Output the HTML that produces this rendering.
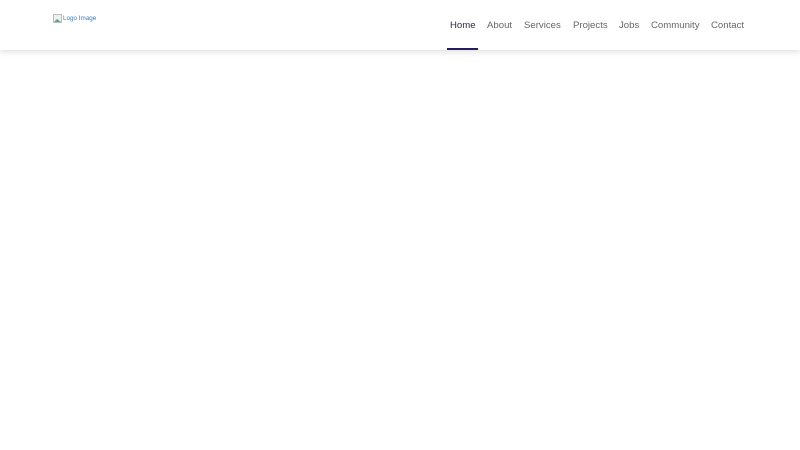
<!DOCTYPE html>
<html><head><meta charset="utf-8"><style>
html,body{margin:0;padding:0;background:#fff;width:800px;height:450px;overflow:hidden;font-family:"Liberation Sans",sans-serif}
.hdr{position:absolute;left:0;top:0;width:800px;height:50px;background:#fff;box-shadow:0 2px 6px rgba(0,0,0,0.12)}
.logo{position:absolute;left:53px;top:14px;font-size:6.3px;color:#3a7bbf;display:flex;align-items:center}
.logo svg{margin-right:1px}
.nav a{position:absolute;top:20px;font-size:9.6px;color:#666;text-decoration:none}
.nav a.act{color:#2d2a4a}
.ul{position:absolute;left:447px;top:48px;width:31px;height:2px;background:#2a1a5e}
</style></head><body>
<div class="hdr">
<div class="logo"><svg width="9" height="9" viewBox="0 0 9 9"><rect x="0.5" y="0.5" width="8" height="8" fill="#eee" stroke="#999" stroke-width="0.6"/><path d="M1 8 L4 5 L8 8Z" fill="#5a9"/></svg>Logo Image</div>
<div class="nav">
<a class="act" style="left:450px">Home</a>
<a style="left:487px">About</a>
<a style="left:524px">Services</a>
<a style="left:573px">Projects</a>
<a style="left:619px">Jobs</a>
<a style="left:651px">Community</a>
<a style="left:711px">Contact</a>
</div>
<div class="ul"></div>
</div>
</body></html>
